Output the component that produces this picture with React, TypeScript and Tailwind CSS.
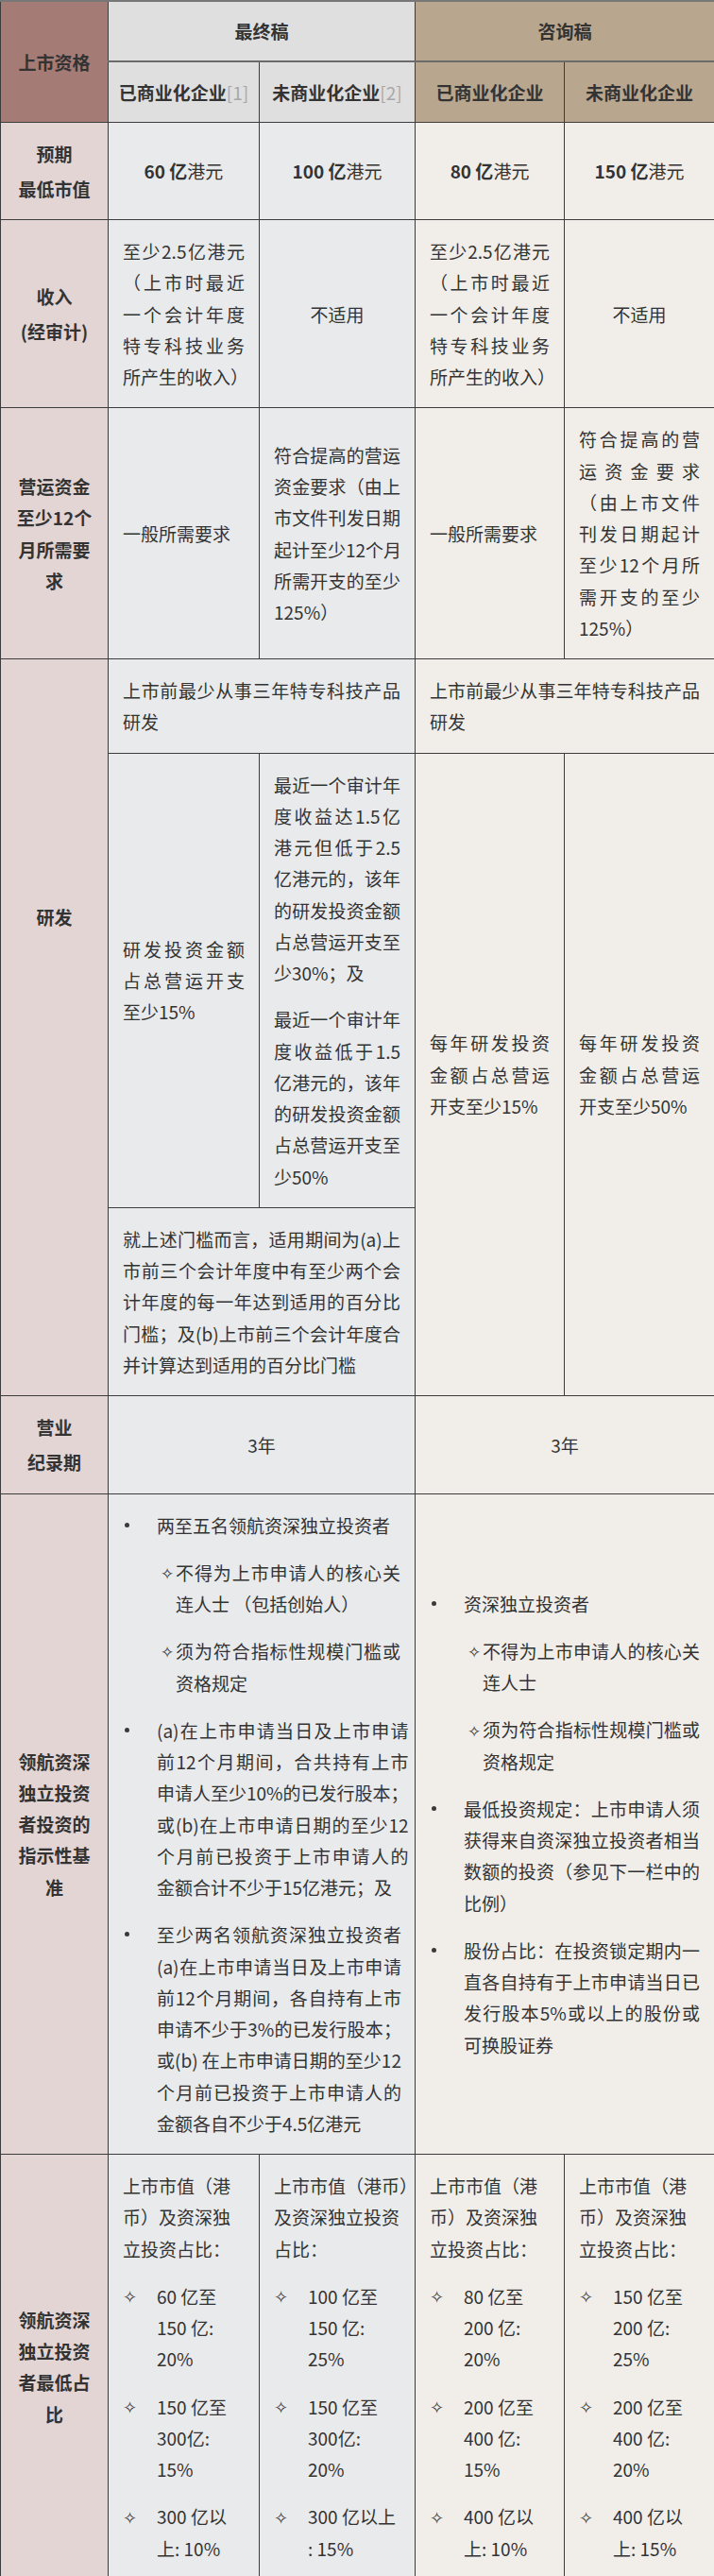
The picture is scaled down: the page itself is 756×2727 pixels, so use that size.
import React from "react";

const LEFT = "bg-[#e9eaec]";
const RIGHT = "bg-[#f1eeea]";
const LABEL = "bg-[#e2d5d4]";
const B = "border border-[#3c3c3c]";
const CELL = "px-[15px] py-4 align-middle";

function Lines({
  lines,
  justify = true,
  className = "",
}: {
  lines: string[];
  justify?: boolean;
  className?: string;
}) {
  return (
    <div className={className}>
      {lines.map((l, i) => (
        <div
          key={i}
          className={
            justify && i < lines.length - 1
              ? "whitespace-nowrap text-justify [text-align-last:justify]"
              : "whitespace-nowrap"
          }
        >
          {l}
        </div>
      ))}
    </div>
  );
}

function Label({ groups, className = "" }: { groups: string[][]; className?: string }) {
  return (
    <td className={`${B} ${LABEL} px-1 py-4 text-center font-bold ${className}`}>
      <div className="flex flex-col gap-[4px]">
        {groups.map((g, i) => (
          <div key={i}>
            {g.map((l, j) => (
              <div key={j} className="whitespace-nowrap">
                {l}
              </div>
            ))}
          </div>
        ))}
      </div>
    </td>
  );
}

function Bullet({ lines }: { lines: string[] }) {
  return (
    <div className="flex">
      <div className="flex h-[33.25px] w-[36px] shrink-0 items-center pl-[2px]">
        <div className="h-[5px] w-[5px] rounded-full bg-[#3a3a3a]" />
      </div>
      <Lines lines={lines} className="flex-1" />
    </div>
  );
}

function Sub({ lines }: { lines: string[] }) {
  return (
    <div className="flex pl-[40px]">
      <div className="flex h-[33.25px] w-[16px] shrink-0 items-center text-[17px] leading-none">✧</div>
      <Lines lines={lines} className="flex-1" />
    </div>
  );
}

function Pct({ head, items }: { head: string[]; items: string[][] }) {
  return (
    <div className="flex flex-col gap-[17px]">
      <Lines lines={head} justify={false} />
      {items.map((it, i) => (
        <div key={i} className="flex">
          <div className="flex h-[33.25px] w-[36px] shrink-0 items-center text-[18px] leading-none">✧</div>
          <Lines lines={it} justify={false} />
        </div>
      ))}
    </div>
  );
}

function Amount({ n }: { n: string }) {
  return (
    <span>
      <span className="font-bold">{n} 亿</span>港元
    </span>
  );
}

export default function App() {
  const head = ["上市市值（港", "币）及资深独", "立投资占比："];
  return (
    <div className="w-[756px] bg-white font-['Noto_Sans_CJK_SC','Noto_Sans',sans-serif] text-[19px] leading-[1.75] text-[#333333]">
      <table className="w-[756px] table-fixed border-collapse">
        <colgroup>
          <col className="w-[114px]" />
          <col className="w-[160px]" />
          <col className="w-[165px]" />
          <col className="w-[158px]" />
          <col className="w-[159px]" />
        </colgroup>
        <tbody>
          <tr className="h-[64px]">
            <td
              rowSpan={2}
              className={`${B} border-t-2 border-t-[#777777] bg-[#a57b76] text-center align-middle font-bold`}
            >
              上市资格
            </td>
            <td
              colSpan={2}
              className={`${B} border-t-2 border-t-[#777777] border-b-2 border-b-[#6b6b6b] bg-[#dfdfdf] text-center align-middle font-bold`}
            >
              最终稿
            </td>
            <td
              colSpan={2}
              className={`${B} border-t-2 border-t-[#777777] border-b-2 border-b-[#6b6b6b] bg-[#b8a68e] text-center align-middle font-bold`}
            >
              咨询稿
            </td>
          </tr>
          <tr className="h-[64px]">
            <td className={`${B} bg-[#dfdfdf] text-center align-middle font-bold whitespace-nowrap`}>
              已商业化企业<span className="font-normal text-[#a8a8a8]">[1]</span>
            </td>
            <td className={`${B} bg-[#dfdfdf] text-center align-middle font-bold whitespace-nowrap`}>
              未商业化企业<span className="font-normal text-[#a8a8a8]">[2]</span>
            </td>
            <td className={`${B} bg-[#b8a68e] text-center align-middle font-bold`}>已商业化企业</td>
            <td className={`${B} bg-[#b8a68e] text-center align-middle font-bold`}>未商业化企业</td>
          </tr>

          <tr>
            <Label groups={[["预期"], ["最低市值"]]} />
            <td className={`${B} ${LEFT} ${CELL} text-center`}>
              <Amount n="60" />
            </td>
            <td className={`${B} ${LEFT} ${CELL} text-center`}>
              <Amount n="100" />
            </td>
            <td className={`${B} ${RIGHT} ${CELL} text-center`}>
              <Amount n="80" />
            </td>
            <td className={`${B} ${RIGHT} ${CELL} text-center`}>
              <Amount n="150" />
            </td>
          </tr>

          <tr>
            <Label groups={[["收入"], ["(经审计)"]]} />
            <td className={`${B} ${LEFT} ${CELL}`}>
              <Lines lines={["至少2.5亿港元", "（上市时最近", "一个会计年度", "特专科技业务", "所产生的收入）"]} />
            </td>
            <td className={`${B} ${LEFT} ${CELL} text-center`}>不适用</td>
            <td className={`${B} ${RIGHT} ${CELL}`}>
              <Lines lines={["至少2.5亿港元", "（上市时最近", "一个会计年度", "特专科技业务", "所产生的收入）"]} />
            </td>
            <td className={`${B} ${RIGHT} ${CELL} text-center`}>不适用</td>
          </tr>

          <tr>
            <Label groups={[["营运资金", "至少12个", "月所需要", "求"]]} />
            <td className={`${B} ${LEFT} ${CELL}`}>一般所需要求</td>
            <td className={`${B} ${LEFT} ${CELL}`}>
              <Lines
                lines={["符合提高的营运", "资金要求（由上", "市文件刊发日期", "起计至少12个月", "所需开支的至少", "125%）"]}
              />
            </td>
            <td className={`${B} ${RIGHT} ${CELL}`}>一般所需要求</td>
            <td className={`${B} ${RIGHT} ${CELL}`}>
              <Lines
                lines={[
                  "符合提高的营",
                  "运资金要求",
                  "（由上市文件",
                  "刊发日期起计",
                  "至少12个月所",
                  "需开支的至少",
                  "125%）",
                ]}
              />
            </td>
          </tr>

          <tr>
            <td rowSpan={3} className={`${B} ${LABEL} pt-[256px] text-center align-top font-bold`}>
              研发
            </td>
            <td colSpan={2} className={`${B} ${LEFT} ${CELL}`}>
              <Lines lines={["上市前最少从事三年特专科技产品", "研发"]} />
            </td>
            <td colSpan={2} className={`${B} ${RIGHT} ${CELL}`}>
              <Lines lines={["上市前最少从事三年特专科技产品", "研发"]} />
            </td>
          </tr>
          <tr>
            <td className={`${B} ${LEFT} ${CELL}`}>
              <Lines lines={["研发投资金额", "占总营运开支", "至少15%"]} />
            </td>
            <td className={`${B} ${LEFT} ${CELL}`}>
              <div className="flex flex-col gap-[16px]">
                <Lines
                  lines={[
                    "最近一个审计年",
                    "度收益达1.5亿",
                    "港元但低于2.5",
                    "亿港元的，该年",
                    "的研发投资金额",
                    "占总营运开支至",
                    "少30%；及",
                  ]}
                />
                <Lines
                  lines={[
                    "最近一个审计年",
                    "度收益低于1.5",
                    "亿港元的，该年",
                    "的研发投资金额",
                    "占总营运开支至",
                    "少50%",
                  ]}
                />
              </div>
            </td>
            <td rowSpan={2} className={`${B} ${RIGHT} ${CELL}`}>
              <Lines lines={["每年研发投资", "金额占总营运", "开支至少15%"]} />
            </td>
            <td rowSpan={2} className={`${B} ${RIGHT} ${CELL}`}>
              <Lines lines={["每年研发投资", "金额占总营运", "开支至少50%"]} />
            </td>
          </tr>
          <tr>
            <td colSpan={2} className={`${B} ${LEFT} ${CELL}`}>
              <Lines
                lines={[
                  "就上述门槛而言，适用期间为(a)上",
                  "市前三个会计年度中有至少两个会",
                  "计年度的每一年达到适用的百分比",
                  "门槛；及(b)上市前三个会计年度合",
                  "并计算达到适用的百分比门槛",
                ]}
              />
            </td>
          </tr>

          <tr>
            <Label groups={[["营业"], ["纪录期"]]} />
            <td colSpan={2} className={`${B} ${LEFT} ${CELL} text-center`}>
              3年
            </td>
            <td colSpan={2} className={`${B} ${RIGHT} ${CELL} text-center`}>
              3年
            </td>
          </tr>

          <tr>
            <Label groups={[["领航资深", "独立投资", "者投资的", "指示性基", "准"]]} />
            <td colSpan={2} className={`${B} ${LEFT} ${CELL}`}>
              <div className="flex flex-col gap-[17px]">
                <Bullet lines={["两至五名领航资深独立投资者"]} />
                <Sub lines={["不得为上市申请人的核心关", "连人士 （包括创始人）"]} />
                <Sub lines={["须为符合指标性规模门槛或", "资格规定"]} />
                <Bullet
                  lines={[
                    "(a)在上市申请当日及上市申请",
                    "前12个月期间，合共持有上市",
                    "申请人至少10%的已发行股本；",
                    "或(b)在上市申请日期的至少12",
                    "个月前已投资于上市申请人的",
                    "金额合计不少于15亿港元；及",
                  ]}
                />
                <Bullet
                  lines={[
                    "至少两名领航资深独立投资者",
                    "(a)在上市申请当日及上市申请",
                    "前12个月期间，各自持有上市",
                    "申请不少于3%的已发行股本；",
                    "或(b) 在上市申请日期的至少12",
                    "个月前已投资于上市申请人的",
                    "金额各自不少于4.5亿港元",
                  ]}
                />
              </div>
            </td>
            <td colSpan={2} className={`${B} ${RIGHT} ${CELL}`}>
              <div className="flex flex-col gap-[17px]">
                <Bullet lines={["资深独立投资者"]} />
                <Sub lines={["不得为上市申请人的核心关", "连人士"]} />
                <Sub lines={["须为符合指标性规模门槛或", "资格规定"]} />
                <Bullet
                  lines={[
                    "最低投资规定：上市申请人须",
                    "获得来自资深独立投资者相当",
                    "数额的投资（参见下一栏中的",
                    "比例）",
                  ]}
                />
                <Bullet
                  lines={[
                    "股份占比：在投资锁定期内一",
                    "直各自持有于上市申请当日已",
                    "发行股本5%或以上的股份或",
                    "可换股证券",
                  ]}
                />
              </div>
            </td>
          </tr>

          <tr>
            <Label
              groups={[["领航资深", "独立投资", "者最低占", "比"]]}
              className="border-b-2 border-b-[#4a4a4a]"
            />
            <td className={`${B} ${LEFT} ${CELL} border-b-2 border-b-[#4a4a4a]`}>
              <Pct
                head={head}
                items={[
                  ["60 亿至", "150 亿:", "20%"],
                  ["150 亿至", "300亿:", "15%"],
                  ["300 亿以", "上: 10%"],
                ]}
              />
            </td>
            <td className={`${B} ${LEFT} ${CELL} border-b-2 border-b-[#4a4a4a]`}>
              <Pct
                head={["上市市值（港币）", "及资深独立投资", "占比："]}
                items={[
                  ["100 亿至", "150 亿:", "25%"],
                  ["150 亿至", "300亿:", "20%"],
                  ["300 亿以上", ": 15%"],
                ]}
              />
            </td>
            <td className={`${B} ${RIGHT} ${CELL} border-b-2 border-b-[#4a4a4a]`}>
              <Pct
                head={head}
                items={[
                  ["80 亿至", "200 亿:", "20%"],
                  ["200 亿至", "400 亿:", "15%"],
                  ["400 亿以", "上: 10%"],
                ]}
              />
            </td>
            <td className={`${B} ${RIGHT} ${CELL} border-b-2 border-b-[#4a4a4a]`}>
              <Pct
                head={head}
                items={[
                  ["150 亿至", "200 亿:", "25%"],
                  ["200 亿至", "400 亿:", "20%"],
                  ["400 亿以", "上: 15%"],
                ]}
              />
            </td>
          </tr>
        </tbody>
      </table>
    </div>
  );
}
